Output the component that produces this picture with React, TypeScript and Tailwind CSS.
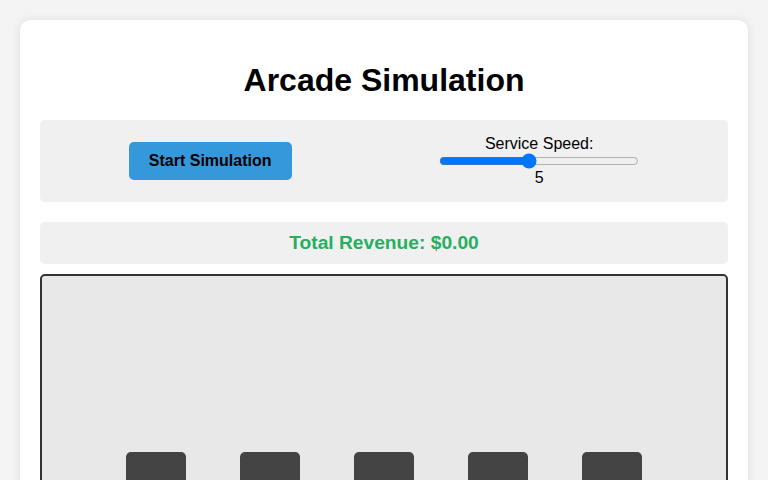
import React, { useState } from 'react';

export default function App() {
  const [speed, setSpeed] = useState(5);
  const machines = [0, 1, 2, 3, 4];

  return (
    <div className="min-h-screen bg-[#f4f4f4] p-5 font-['Liberation_Sans',Arial,sans-serif] text-black">
      <div className="rounded-[10px] bg-white p-5 shadow-[0_0_10px_rgba(0,0,0,0.1)]">
        <h1 className="my-[21.5px] text-center text-[32px] font-bold leading-[37px]">Arcade Simulation</h1>

        {/* Controls */}
        <div className="flex items-center justify-around rounded-[5px] bg-[#f0f0f0] p-[15px]">
          <button className="rounded-[5px] bg-[#3498db] px-5 py-[10px] text-base font-bold leading-[18px] text-black">
            Start Simulation
          </button>
          <div className="flex w-[200px] flex-col items-center">
            <label className="text-base leading-[18px]">Service Speed:</label>
            <input
              type="range"
              min={1}
              max={10}
              value={speed}
              onChange={(e) => setSpeed(Number(e.target.value))}
              className="w-[200px]"
            />
            <span className="text-base leading-[18px]">{speed}</span>
          </div>
        </div>

        {/* Revenue */}
        <div className="mt-5 rounded-[5px] bg-[#f0f0f0] p-[10px] text-center text-[19.2px] font-bold leading-[22px] text-[#27ae60]">
          Total Revenue: $0.00
        </div>

        {/* Arcade floor */}
        <div className="mt-[10px] h-[400px] rounded-[5px] border-2 border-[#333] bg-[#e8e8e8] pt-[176px]">
          <div className="flex justify-center gap-[54px]">
            {machines.map((m) => (
              <div key={m} className="h-[80px] w-[60px] rounded-[5px] bg-[#444]" />
            ))}
          </div>
        </div>
      </div>
    </div>
  );
}
